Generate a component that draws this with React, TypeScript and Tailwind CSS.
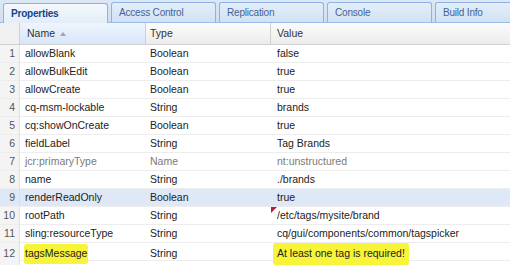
import React from "react";

interface Prop {
  name: string;
  type: string;
  value: string;
  muted?: boolean;
  selected?: boolean;
  dirty?: boolean;
  marked?: boolean;
}

const rows: Prop[] = [
  { name: "allowBlank", type: "Boolean", value: "false" },
  { name: "allowBulkEdit", type: "Boolean", value: "true" },
  { name: "allowCreate", type: "Boolean", value: "true" },
  { name: "cq-msm-lockable", type: "String", value: "brands" },
  { name: "cq:showOnCreate", type: "Boolean", value: "true" },
  { name: "fieldLabel", type: "String", value: "Tag Brands" },
  { name: "jcr:primaryType", type: "Name", value: "nt:unstructured", muted: true },
  { name: "name", type: "String", value: "./brands" },
  { name: "renderReadOnly", type: "Boolean", value: "true", selected: true },
  { name: "rootPath", type: "String", value: "/etc/tags/mysite/brand", dirty: true },
  { name: "sling:resourceType", type: "String", value: "cq/gui/components/common/tagspicker" },
  { name: "tagsMessage", type: "String", value: "At least one tag is required!", marked: true },
];

const tabs = ["Properties", "Access Control", "Replication", "Console", "Build Info"];

export default function App() {
  return (
    <div className="w-[510px] h-[268px] overflow-hidden bg-white font-['Liberation_Sans',Arial,sans-serif] text-[10.5px] text-[#222]">
      {/* Tabs */}
      <div className="h-[23px] flex items-end gap-[3px] pl-[3px] bg-gradient-to-b from-[#dde8f5] to-[#cfdef0] border-b border-[#99bbe8]">
        {tabs.map((t, i) => (
          <div
            key={t}
            className={`h-[20px] w-[105px] shrink-0 flex items-center pl-[7px] rounded-t-[3px] border border-b-0 border-[#8db2e3] text-[10px] tracking-[-0.2px] ${
              i === 0
                ? "font-bold text-[#15428b] bg-gradient-to-b from-[#f4f8fd] to-[#e3edf9] -mb-px h-[20px]"
                : "text-[#3f649a] bg-gradient-to-b from-[#e4eef9] to-[#d2e1f3]"
            }`}
          >
            {t}
          </div>
        ))}
      </div>

      {/* Header */}
      <div className="grid grid-cols-[20px_126px_125px_1fr] h-[22px] border-b border-[#d0d0d0] bg-gradient-to-b from-[#fbfbfb] to-[#ececec] text-[#333]">
        <div className="border-r border-[#d0d0d0] bg-[#f0f0f0]" />
        <div className="flex items-center gap-[5px] pl-[7px] border-r border-[#d0d0d0] bg-gradient-to-b from-[#eef5fd] to-[#d8e6f8]">
          Name
          <svg width="6" height="4" viewBox="0 0 6 4">
            <path d="M0 4 L3 0 L6 4 Z" fill="#9aa6b4" />
          </svg>
        </div>
        <div className="flex items-center pl-[4px] border-r border-[#d0d0d0]">Type</div>
        <div className="flex items-center pl-[6px]">Value</div>
      </div>

      {/* Rows */}
      {rows.map((r, i) => (
        <div
          key={r.name}
          className={`grid grid-cols-[20px_126px_125px_1fr] h-[18px] border-b border-[#ededed] ${
            r.selected ? "bg-[#dfe8f6]" : "bg-white"
          } ${r.muted ? "text-[#7a7a7a]" : ""}`}
        >
          <div
            className={`flex items-center justify-end pr-[4px] border-r border-[#e0e0e0] text-[#555] ${
              r.selected ? "bg-[#dfe8f6]" : "bg-[#f4f4f4]"
            }`}
          >
            {i + 1}
          </div>
          <div className="flex items-center pl-[5px] whitespace-nowrap">
            {r.marked ? (
              <span className="bg-[#f7f43a] rounded-[3px] px-[1px] py-[2px] -ml-[1px]">{r.name}</span>
            ) : (
              r.name
            )}
          </div>
          <div className="flex items-center pl-[4px]">{r.type}</div>
          <div className="relative flex items-center pl-[6px] whitespace-nowrap">
            {r.dirty && (
              <svg className="absolute left-0 top-0" width="6" height="6" viewBox="0 0 6 6">
                <path d="M0 0 L6 0 L0 6 Z" fill="#b3203a" />
              </svg>
            )}
            {r.marked ? (
              <span className="bg-[#f7f43a] rounded-[3px] px-[4px] py-[3px] -ml-[4px]">{r.value}</span>
            ) : (
              r.value
            )}
          </div>
        </div>
      ))}
    </div>
  );
}
